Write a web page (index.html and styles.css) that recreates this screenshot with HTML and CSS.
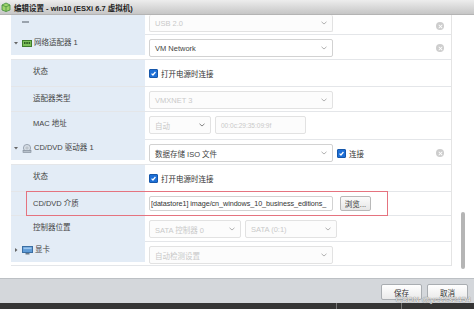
FILE: index.html
```html
<!DOCTYPE html>
<html>

<head>
    <meta charset="UTF-8">
    <title>编辑设置 - win10</title>
    <link rel="stylesheet" href="styles.css">
</head>

<body>
    <!-- Title bar -->
    <div class="titlebar">
        <svg class="appicon" width="10" height="10" viewBox="0 0 10 10">
            <path d="M1 3 L5 1 L9 3 L9 8 L5 9.5 L1 8 Z" fill="#9fd36a" stroke="#3f8a3a" stroke-width="0.8"/>
            <path d="M1 3 L5 4.8 L9 3 M5 4.8 L5 9.5" fill="none" stroke="#3f8a3a" stroke-width="0.7"/>
        </svg>
        <span>编辑设置 - win10 (ESXi 6.7 虚拟机)</span>
    </div>

    <div class="content">
        <div class="table">
            <!-- partially scrolled row -->
            <div class="row first">
                <div class="lbl"><span class="dash"></span></div>
                <div class="val">
                    <div class="select dis top"><span>USB 2.0</span><svg class="chev" viewBox="0 0 6 4"><path d="M0.5 0.8 L3 3 L5.5 0.8"/></svg></div>
                    <span class="remove"></span>
                </div>
            </div>

            <!-- network adapter -->
            <div class="row r25">
                <div class="lbl group">
                    <svg class="caret" viewBox="0 0 4 4"><path d="M0 1 L4 1 L2 3.5 Z"/></svg>
                    <svg class="ico" width="10" height="7" viewBox="0 0 10 7">
                        <rect x="0.5" y="0.5" width="9" height="6" fill="#7cc05a" stroke="#3f7d2c"/>
                        <rect x="2" y="2" width="1.5" height="2" fill="#2f5f22"/>
                        <rect x="4.3" y="2" width="1.5" height="2" fill="#2f5f22"/>
                        <rect x="6.6" y="2" width="1.5" height="2" fill="#2f5f22"/>
                    </svg>
                    <span>网络适配器 1</span>
                </div>
                <div class="val">
                    <div class="select"><span>VM Network</span><svg class="chev" viewBox="0 0 6 4"><path d="M0.5 0.8 L3 3 L5.5 0.8"/></svg></div>
                    <span class="remove"></span>
                </div>
            </div>

            <div class="row r27">
                <div class="lbl sub"><span>状态</span></div>
                <div class="val">
                    <label class="chk"><span class="box"><svg viewBox="0 0 9 9"><path d="M2 4.6 L3.8 6.4 L7 2.6"/></svg></span>打开电源时连接</label>
                </div>
            </div>

            <div class="row r25">
                <div class="lbl sub"><span>适配器类型</span></div>
                <div class="val">
                    <div class="select dis"><span>VMXNET 3</span><svg class="chev" viewBox="0 0 6 4"><path d="M0.5 0.8 L3 3 L5.5 0.8"/></svg></div>
                </div>
            </div>

            <div class="row r28">
                <div class="lbl sub"><span>MAC 地址</span></div>
                <div class="val">
                    <div class="select dis small"><span>自动</span><svg class="chev dark" viewBox="0 0 6 4"><path d="M0.5 0.8 L3 3 L5.5 0.8"/></svg></div>
                    <div class="input dis mac"><span>00:0c:29:35:09:9f</span></div>
                </div>
            </div>

            <!-- CD/DVD drive -->
            <div class="row r25">
                <div class="lbl group">
                    <svg class="caret" viewBox="0 0 4 4"><path d="M0 1 L4 1 L2 3.5 Z"/></svg>
                    <svg class="ico" width="10" height="9" viewBox="0 0 10 9">
                        <circle cx="5" cy="4" r="3.6" fill="#d6dde4" stroke="#8a96a3" stroke-width="0.8"/>
                        <circle cx="5" cy="4" r="1" fill="#fff" stroke="#8a96a3" stroke-width="0.6"/>
                        <rect x="1" y="6.3" width="8" height="2.2" fill="#b7c1cb" stroke="#7d8894" stroke-width="0.6"/>
                    </svg>
                    <span>CD/DVD 驱动器 1</span>
                </div>
                <div class="val">
                    <div class="select"><span>数据存储 ISO 文件</span><svg class="chev" viewBox="0 0 6 4"><path d="M0.5 0.8 L3 3 L5.5 0.8"/></svg></div>
                    <label class="chk"><span class="box"><svg viewBox="0 0 9 9"><path d="M2 4.6 L3.8 6.4 L7 2.6"/></svg></span>连接</label>
                    <span class="remove"></span>
                </div>
            </div>

            <div class="row r27">
                <div class="lbl sub"><span>状态</span></div>
                <div class="val">
                    <label class="chk"><span class="box"><svg viewBox="0 0 9 9"><path d="M2 4.6 L3.8 6.4 L7 2.6"/></svg></span>打开电源时连接</label>
                </div>
            </div>

            <div class="row r24 media">
                <div class="lbl sub"><span>CD/DVD 介质</span></div>
                <div class="val">
                    <div class="input path"><span>[datastore1] image/cn_windows_10_business_editions_</span></div>
                    <button class="browse">浏览...</button>
                </div>
                <div class="mark"></div>
            </div>

            <div class="row r26">
                <div class="lbl sub"><span>控制器位置</span></div>
                <div class="val">
                    <div class="select dis half"><span>SATA 控制器 0</span><svg class="chev" viewBox="0 0 6 4"><path d="M0.5 0.8 L3 3 L5.5 0.8"/></svg></div>
                    <div class="select dis half"><span>SATA (0:1)</span><svg class="chev" viewBox="0 0 6 4"><path d="M0.5 0.8 L3 3 L5.5 0.8"/></svg></div>
                </div>
            </div>

            <!-- video card -->
            <div class="row r24">
                <div class="lbl group">
                    <svg class="caret" viewBox="0 0 4 4"><path d="M1 0 L3.5 2 L1 4 Z"/></svg>
                    <svg class="ico" width="11" height="9" viewBox="0 0 11 9">
                        <rect x="0.5" y="0.5" width="10" height="6" fill="#5f9bd6" stroke="#3a6ea3"/>
                        <rect x="1.5" y="1.5" width="8" height="1.6" fill="#9cc6ee"/>
                        <rect x="3.5" y="7" width="4" height="1.5" fill="#6b7a88"/>
                    </svg>
                    <span>显卡</span>
                </div>
                <div class="val">
                    <div class="select dis"><span>自动检测设置</span><svg class="chev" viewBox="0 0 6 4"><path d="M0.5 0.8 L3 3 L5.5 0.8"/></svg></div>
                </div>
            </div>
        </div>

        <div class="scroll"><div class="thumb"></div></div>
    </div>

    <!-- Footer -->
    <div class="footer">
        <button class="btn">保存</button>
        <button class="btn">取消</button>
        <span class="watermark">CSDN @yc1232454</span>
    </div>
    <div class="taskbar">
        <span class="seg s1"></span>
        <span class="seg s2"></span>
    </div>
</body>

</html>
```

FILE: styles.css
```css
/* General styles */
body {
    margin: 0;
    width: 474px;
    height: 309px;
    overflow: hidden;
    font-family: "Liberation Sans", "Noto Sans CJK SC", sans-serif;
    font-size: 7.5px;
    color: #444;
    background-color: #fff;
}

.titlebar {
    height: 15px;
    box-sizing: border-box;
    display: flex;
    align-items: center;
    gap: 3px;
    padding-left: 1px;
    background: linear-gradient(#ededed, #c6c6c6);
    border-bottom: 1px solid #b4b4b4;
    font-weight: bold;
    font-size: 7.5px;
    color: #222;
}

.content {
    height: 263px;
    display: flex;
}

.table {
    margin-left: 11px;
    width: 441px;
    border-right: 1px solid #e4e4e4;
    align-self: flex-start;
}

.row {
    display: flex;
    box-sizing: border-box;
    border-bottom: 1px solid #e4e6e9;
    position: relative;
}

.row.first { height: 20px; }
.row.r24 { height: 24px; }
.row.r25 { height: 25px; }
.row.r26 { height: 26px; }
.row.r27 { height: 27px; }
.row.r28 { height: 28px; }

.lbl {
    width: 134px;
    flex-shrink: 0;
    background-color: #e3ecf6;
    display: flex;
    align-items: flex-start;
    padding-top: 4px;
    box-sizing: border-box;
    line-height: 16px;
    color: #444;
}

.lbl.sub {
    padding-left: 22px;
}

.lbl.group {
    padding-left: 3px;
    align-items: center;
    height: 24px;
    padding-top: 0;
    margin-top: -4px;
    line-height: 16px;
}

.lbl .caret {
    width: 4px;
    height: 4px;
    fill: #666;
    margin-right: 4px;
}

.lbl .ico {
    margin-right: 2px;
}

.dash {
    width: 7px;
    height: 2px;
    background-color: #9aa3ad;
    margin: 2px 0 0 11px;
}

.val {
    flex: 1;
    display: flex;
    align-items: flex-start;
    padding: 4px 7px 0 4px;
    gap: 4px;
}

.select,
.input {
    width: 184px;
    height: 18px;
    box-sizing: border-box;
    border: 1px solid #d2d2d2;
    border-radius: 2px;
    background-color: #fff;
    display: flex;
    align-items: center;
    justify-content: space-between;
    padding: 0 5px 0 5px;
    color: #444;
    white-space: nowrap;
    overflow: hidden;
}

.select.dis,
.input.dis {
    color: #c9c9c9;
    background-color: #fcfcfc;
    border-color: #e2e2e2;
}

.select.top {
    height: 17px;
    margin-top: -4px;
    border-top: none;
}

.select.small {
    width: 62px;
}

.select.half {
    width: 92px;
}

.input.mac {
    width: 91px;
    font-size: 6.5px;
}

.chev {
    width: 6px;
    height: 4px;
    fill: none;
    stroke: #a8a8a8;
    stroke-width: 0.9;
    flex-shrink: 0;
}

.chev.dark {
    stroke: #777;
}

.remove {
    margin-left: auto;
    margin-top: 5px;
    width: 8px;
    height: 8px;
    border-radius: 50%;
    background-color: #cdcdcd;
    position: relative;
}

.remove::before,
.remove::after {
    content: "";
    position: absolute;
    left: 3.5px;
    top: 1.5px;
    width: 1px;
    height: 5px;
    background-color: #fff;
    transform: rotate(45deg);
}

.remove::after {
    transform: rotate(-45deg);
}

.first .remove {
    margin-top: 3px;
}

.chk {
    display: flex;
    align-items: center;
    height: 18px;
    gap: 3px;
    color: #333;
}

.box {
    width: 9px;
    height: 9px;
    box-sizing: border-box;
    border-radius: 1px;
    background-color: #1d6fd6;
    border: 1px solid #1657aa;
    display: flex;
}

.box svg {
    width: 7px;
    height: 7px;
    fill: none;
    stroke: #fff;
    stroke-width: 1.6;
}

.media .val {
    padding-top: 4px;
    gap: 7px;
}

.input.path {
    height: 15px;
    padding: 0 1px;
    font-size: 7.2px;
    letter-spacing: -0.05px;
    color: #333;
    justify-content: flex-start;
}

.browse {
    height: 15px;
    width: 31px;
    padding: 0;
    font-family: inherit;
    font-size: 7.5px;
    color: #333;
    border: 1px solid #b9b9b9;
    border-radius: 2px;
    background: linear-gradient(#fbfbfb, #e6e6e6);
}

/* red highlight box drawn over the row */
.mark {
    position: absolute;
    left: 15px;
    top: -1px;
    width: 362px;
    height: 25px;
    box-sizing: border-box;
    border: 1px solid #e5737f;
}

.scroll {
    width: 22px;
    padding-left: 9px;
    box-sizing: border-box;
}

.thumb {
    width: 4px;
    height: 57px;
    margin-top: 197px;
    border-radius: 2px;
    background-color: #b5b5b5;
}

.footer {
    height: 25px;
    box-sizing: border-box;
    background-color: #d4d7db;
    border-top: 1px solid #bcc0c4;
    display: flex;
    justify-content: flex-end;
    align-items: flex-start;
    gap: 5px;
    padding: 5px 6px 0 0;
    position: relative;
}

.btn {
    width: 41px;
    height: 16px;
    padding: 0;
    font-family: inherit;
    font-size: 7.5px;
    color: #333;
    border: 1px solid #a9adb1;
    border-radius: 2px;
    background: linear-gradient(#ffffff, #eaeaea);
}

.watermark {
    position: absolute;
    right: 3px;
    bottom: -1px;
    z-index: 1;
    font-size: 8px;
    line-height: 9px;
    color: #f4f4f4;
    text-shadow: 0 0 1px #777, 0 0 1px #777;
    letter-spacing: 0.2px;
}

.taskbar {
    height: 6px;
    background-color: #353535;
    display: flex;
}

.seg {
    height: 6px;
}

.s1 {
    margin-left: 336px;
    width: 1px;
    background-color: #777;
}

.s2 {
    margin-left: 64px;
    width: 1px;
    background-color: #777;
}
```
